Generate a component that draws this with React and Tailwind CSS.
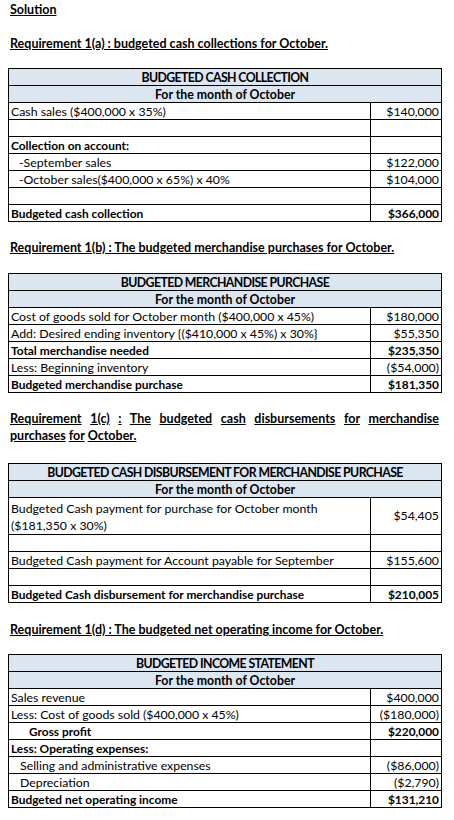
import React from "react";

const Heading = ({ children, className = "" }) => (
  <p className={`px-[10px] text-[12.5px] font-bold underline leading-[17px] ${className}`}>{children}</p>
);

const Row = ({ label, value, bold, indent, first }) => (
  <div className={`grid grid-cols-[362px_1fr] ${first ? "" : "border-t border-black"}`}>
    <div
      className={`h-[16px] border-r border-black leading-[17px] whitespace-nowrap ${bold ? "text-[11.9px] font-bold" : ""} ${indent || "pl-[2px]"}`}
    >
      {label}
    </div>
    <div className={`h-[16px] pr-[2px] text-right leading-[17px] ${bold ? "text-[11.9px] font-bold" : ""}`}>{value}</div>
  </div>
);

const TableHead = ({ title }) => (
  <>
    <div className="h-[16px] bg-[#dce6f1] text-center text-[12.3px] font-bold leading-[17px] tracking-[-0.6px]">
      {title}
    </div>
    <div className="h-[17px] border-t border-black bg-[#dce6f1] text-center font-bold leading-[17px]">
      For the month of October
    </div>
  </>
);

const Table = ({ title, rows, className = "" }) => (
  <div className={`ml-[8px] w-[434px] border border-black text-[12.3px] ${className}`}>
    <TableHead title={title} />
    {rows.map((r, i) => (
      <Row key={i} {...r} />
    ))}
  </div>
);

const collection = [
  { label: "Cash sales ($400,000 x 35%)", value: "$140,000" },
  { label: "", value: "" },
  { label: "Collection on account:", value: "", bold: true },
  { label: "-September sales", value: "$122,000", indent: "pl-[10px]" },
  { label: "-October sales($400,000 x 65%)  x 40%", value: "$104,000", indent: "pl-[10px]" },
  { label: "", value: "" },
  { label: "Budgeted cash collection", value: "$366,000", bold: true },
];

const purchases = [
  { label: "Cost of goods sold for October month ($400,000 x 45%)", value: "$180,000" },
  { label: "Add: Desired ending inventory {($410,000 x 45%) x 30%}", value: "$55,350" },
  { label: "Total merchandise needed", value: "$235,350", bold: true },
  { label: "Less: Beginning inventory", value: "($54,000)" },
  { label: "Budgeted merchandise purchase", value: "$181,350", bold: true },
];

const disbursementRest = [
  { label: "", value: "" },
  { label: "Budgeted Cash payment for Account payable for September", value: "$155,600" },
  { label: "", value: "" },
  { label: "Budgeted Cash disbursement for merchandise purchase", value: "$210,005", bold: true },
];

const income = [
  { label: "Sales revenue", value: "$400,000" },
  { label: "Less: Cost of goods sold ($400,000 x 45%)", value: "($180,000)" },
  { label: "Gross profit", value: "$220,000", bold: true, indent: "pl-[20px]" },
  { label: "Less: Operating expenses:", value: "", bold: true },
  { label: "Selling and administrative expenses", value: "($86,000)", indent: "pl-[11px]" },
  { label: "Depreciation", value: "($2,790)", indent: "pl-[11px]" },
  { label: "Budgeted net operating income", value: "$131,210", bold: true },
];

const req1c =
  "Requirement 1(c) : The budgeted cash disbursements for merchandise purchases for October.";

export default function App() {
  return (
    <div className="min-h-[820px] w-[454px] bg-white pt-[1px] font-['Lato',sans-serif] text-black">
      <Heading>Solution</Heading>
      <Heading className="mt-[17px]">Requirement 1(a) : budgeted cash collections for October.</Heading>
      <Table className="mt-[16px]" title="BUDGETED CASH COLLECTION" rows={collection} />

      <Heading className="mt-[17px]">Requirement 1(b) : The budgeted merchandise purchases for October.</Heading>
      <Table className="mt-[17px]" title="BUDGETED MERCHANDISE PURCHASE" rows={purchases} />

      <p className="mt-[17px] pl-[10px] pr-[15px] text-justify text-[12.5px] font-bold leading-[17px]">
        {req1c.split(" ").map((w, i, a) => (
          <React.Fragment key={i}>
            <span className="underline">{w}</span>
            {i < a.length - 1 ? " " : ""}
          </React.Fragment>
        ))}
      </p>

      <div className="mt-[19px] ml-[8px] w-[434px] border border-black text-[12.3px]">
        <TableHead title="BUDGETED CASH DISBURSEMENT FOR MERCHANDISE PURCHASE" />
        <div className="grid grid-cols-[362px_1fr] border-t border-black">
          <div className="h-[36px] border-r border-black pl-[2px] pt-[2px] leading-[17px]">
            Budgeted Cash payment for purchase for October month
            <br />
            ($181,350 x 30%)
          </div>
          <div className="flex h-[36px] items-center justify-end pr-[2px]">$54,405</div>
        </div>
        {disbursementRest.map((r, i) => (
          <Row key={i} {...r} />
        ))}
      </div>

      <Heading className="mt-[18px]">Requirement 1(d) : The budgeted net operating income for October.</Heading>
      <Table className="mt-[16px]" title="BUDGETED INCOME STATEMENT" rows={income} />
    </div>
  );
}
